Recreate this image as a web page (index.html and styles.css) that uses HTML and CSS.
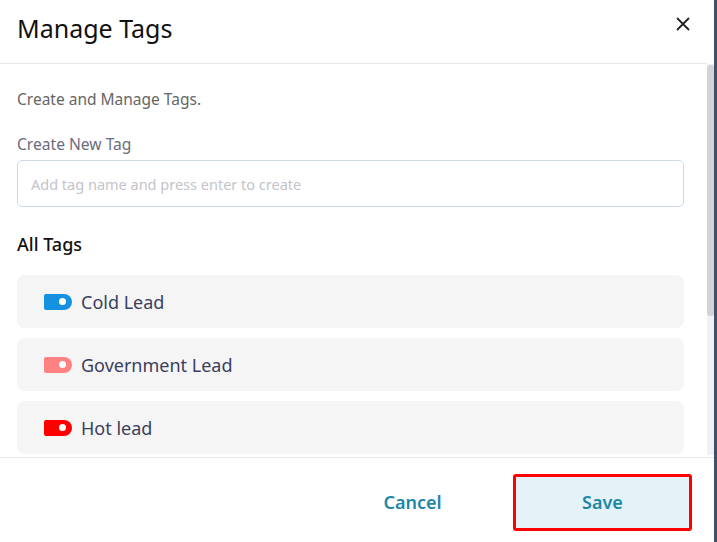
FILE: index.html
```html
<!DOCTYPE html>
<html lang="en">
<head>
<meta charset="utf-8">
<title>Manage Tags</title>
<link rel="stylesheet" href="styles.css">
</head>
<body>
<div class="modal">
  <header class="modal-header">
    <h1 class="modal-title">Manage Tags</h1>
    <button class="close-btn" aria-label="Close">
      <svg width="14" height="14" viewBox="0 0 14 14"><path d="M1.5 1.5 L12.5 12.5 M12.5 1.5 L1.5 12.5" stroke="#222" stroke-width="1.8" stroke-linecap="round"/></svg>
    </button>
  </header>
  <div class="body-wrap">
    <div class="modal-body">
      <p class="intro">Create and Manage Tags.</p>
      <label class="field-label" for="newtag">Create New Tag</label>
      <input id="newtag" class="tag-input" type="text" placeholder="Add tag name and press enter to create">
      <h2 class="section-title">All Tags</h2>
      <ul class="tag-list">
        <li class="tag-row"><span class="tag-icon blue"></span><span class="tag-name">Cold Lead</span></li>
        <li class="tag-row"><span class="tag-icon salmon"></span><span class="tag-name">Government Lead</span></li>
        <li class="tag-row"><span class="tag-icon red"></span><span class="tag-name">Hot lead</span></li>
      </ul>
    </div>
    <div class="scrollbar" aria-hidden="true"><div class="scroll-thumb"></div></div>
  </div>
  <footer class="modal-footer">
    <button class="btn btn-cancel">Cancel</button>
    <button class="btn btn-save">Save</button>
  </footer>
</div>
</body>
</html>
```

FILE: styles.css
```css
html, body {
  margin: 0;
  padding: 0;
  height: 100%;
}
body {
  background: #3f5168;
  font-family: "Noto Sans", "Open Sans", sans-serif;
  overflow: hidden;
}
.modal {
  width: 714px;
  height: 542px;
  background: #fff;
  display: flex;
  flex-direction: column;
}
.modal-header {
  height: 64px;
  flex: none;
  box-sizing: border-box;
  width: 707px;
  border-bottom: 1px solid #e8e8e8;
  padding: 0 17px 0 17px;
  display: flex;
  align-items: center;
  justify-content: space-between;
}
.modal-title {
  margin: 0 0 8px;
  font-size: 25px;
  font-weight: 400;
  color: #111;
}
.close-btn {
  border: 0;
  background: none;
  padding: 0;
  margin-bottom: 15px;
  width: 14px;
  height: 14px;
  display: flex;
}
.body-wrap {
  flex: 1;
  min-height: 0;
  display: flex;
}
.modal-body {
  flex: 1;
  overflow: hidden;
  padding: 24px 23px 0 17px;
}
.scrollbar {
  width: 7px;
  flex: none;
  background: #f1f1f1;
  margin-bottom: 2px;
}
.scroll-thumb {
  height: 251px;
  margin-top: 1px;
  background: #d3d3d3;
  border-radius: 3px;
}
.intro {
  margin: 0;
  font-size: 15.5px;
  line-height: 22px;
  color: #666;
}
.field-label {
  display: block;
  margin-top: 24px;
  font-size: 15.6px;
  line-height: 20px;
  color: #6b6c7c;
}
.tag-input {
  display: block;
  box-sizing: border-box;
  width: 100%;
  height: 47px;
  margin-top: 6px;
  border: 1px solid #cfd9ec;
  border-radius: 5px;
  padding: 0 13px;
  font-family: inherit;
  font-size: 14.5px;
  outline: none;
}
.tag-input::placeholder {
  color: #c3c3cb;
}
.section-title {
  margin: 25px 0 0;
  font-size: 18px;
  line-height: 24px;
  font-weight: 500;
  color: #111;
}
.tag-list {
  list-style: none;
  margin: 19px 0 0;
  padding: 0;
  display: flex;
  flex-direction: column;
  gap: 10px;
}
.tag-row {
  height: 53px;
  flex: none;
  box-sizing: border-box;
  background: #f5f5f5;
  border-radius: 8px;
  display: flex;
  align-items: center;
  padding-left: 27px;
  gap: 9px;
}
.tag-icon {
  position: relative;
  width: 28px;
  height: 16px;
  border-radius: 2px 8px 8px 2px;
  flex: none;
}
.tag-icon::after {
  content: "";
  position: absolute;
  top: 4.5px;
  left: 15px;
  width: 7px;
  height: 7px;
  border-radius: 50%;
  background: #fff;
}
.tag-icon.blue { background: #1591e1; }
.tag-icon.salmon { background: #ff8181; }
.tag-icon.red { background: #ff0000; }
.tag-name {
  font-size: 18px;
  color: #3a3f5c;
}
.modal-footer {
  flex: none;
  height: 85px;
  box-sizing: border-box;
  border-top: 1px solid #e6e6e6;
  display: flex;
  justify-content: flex-end;
  align-items: center;
  gap: 11px;
  padding: 4px 22px 0 0;
}
.btn {
  width: 179px;
  height: 57px;
  font-family: inherit;
  font-size: 18px;
  font-weight: 600;
  color: #1c87a7;
  border-radius: 3px;
  cursor: pointer;
}
.btn-cancel {
  background: none;
  border: 0;
}
.btn-save {
  background: #e3f3f8;
  border: 3px solid #ff0000;
}
```
